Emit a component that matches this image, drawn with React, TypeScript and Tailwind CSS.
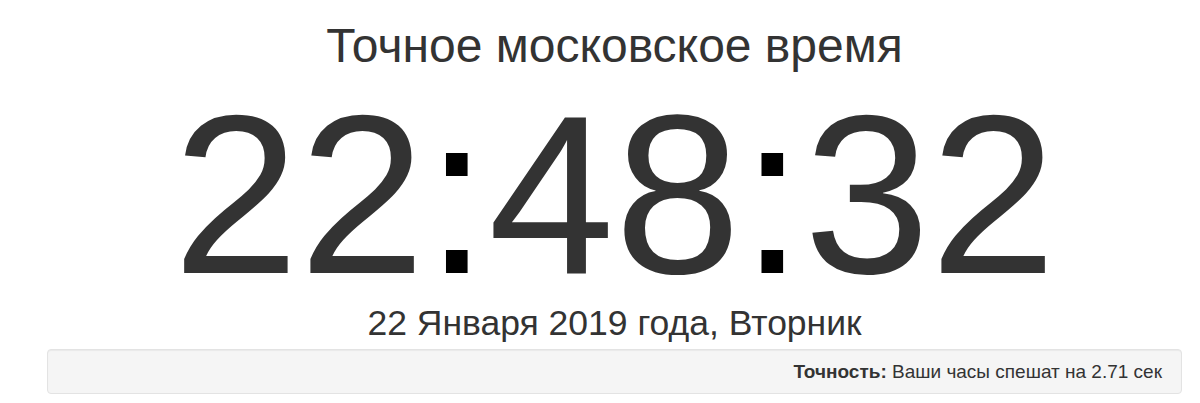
import React from "react";

export default function App() {
  const font = { fontFamily: '"Liberation Sans", Arial, sans-serif' };
  return (
    <div className="w-[1200px] h-[403px] bg-white overflow-hidden" style={font}>
      <div className="ml-[47px] w-[1135px] flex flex-col items-center text-[#333]">
        <h1 className="mt-[22px] text-[48px] leading-[48px] font-normal whitespace-nowrap">Точное московское время</h1>
        <div className="mt-[17px] text-[227px] leading-[216px] whitespace-nowrap">
          <span>22</span>
          <span className="text-black">:</span>
          <span>48</span>
          <span className="text-black">:</span>
          <span>32</span>
        </div>
        <div className="mt-[3px] text-[35.5px] leading-[34px] whitespace-nowrap">22 Января 2019 года, Вторник</div>
        <div className="mt-[9px] w-full h-[45px] bg-[#f5f5f5] border border-[#e3e3e3] rounded-[4px] shadow-[inset_0_1px_1px_rgba(0,0,0,0.05)] flex items-center justify-end pr-[19px] text-[19px] leading-[19px]">
          <span className="whitespace-nowrap">
            <b className="font-bold">Точность:</b> Ваши часы спешат на 2.71 сек
          </span>
        </div>
      </div>
    </div>
  );
}
